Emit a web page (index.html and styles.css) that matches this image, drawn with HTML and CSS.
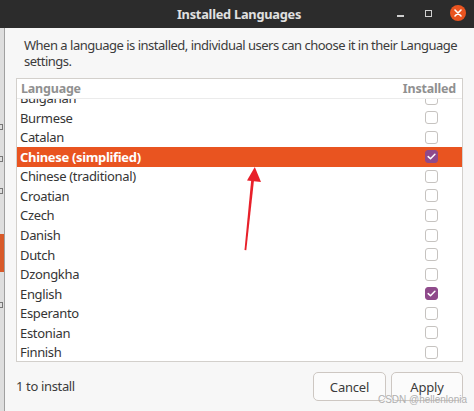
FILE: index.html
```html
<!DOCTYPE html>
<html>
<head>
<meta charset="utf-8">
<link rel="stylesheet" href="styles.css">
</head>
<body>
<div class="screen">
  <div class="titlebar">
    <div class="title">Installed Languages</div>
    <div class="controls">
      <span class="ctl min"></span>
      <span class="ctl max"></span>
      <span class="ctl close">
        <svg width="16" height="16" viewBox="0 0 16 16"><circle cx="8" cy="8" r="8" fill="#e95420"/><path d="M5 5 L11 11 M11 5 L5 11" stroke="#fff" stroke-width="1.6" stroke-linecap="round"/></svg>
      </span>
    </div>
  </div>
  <div class="main">
    <div class="strip">
      <span class="strip-mark m1"></span>
      <span class="strip-mark m2"></span>
      <span class="strip-mark m3"></span>
      <span class="strip-orange"></span>
      <span class="strip-mark m4"></span>
    </div>
    <div class="dialog">
      <p class="desc">When a language is installed, individual users can choose it in their Language settings.</p>
      <div class="listbox">
        <div class="header">
          <span class="col-name">Language</span>
          <span class="col-inst">Installed</span>
        </div>
        <div class="rows-clip">
          <div class="rows">
            <div class="row"><span class="name">Bulgarian</span><span class="cell"><span class="cb"></span></span></div>
            <div class="row"><span class="name">Burmese</span><span class="cell"><span class="cb"></span></span></div>
            <div class="row"><span class="name">Catalan</span><span class="cell"><span class="cb"></span></span></div>
            <div class="row selected"><span class="name">Chinese (simplified)</span><span class="cell"><span class="cb checked"><svg width="13" height="13" viewBox="0 0 13 13"><path d="M3.2 6.6 L5.5 8.8 L9.9 4.3" fill="none" stroke="#fff" stroke-width="1.5" stroke-linecap="round" stroke-linejoin="round"/></svg></span></span></div>
            <div class="row"><span class="name">Chinese (traditional)</span><span class="cell"><span class="cb"></span></span></div>
            <div class="row"><span class="name">Croatian</span><span class="cell"><span class="cb"></span></span></div>
            <div class="row"><span class="name">Czech</span><span class="cell"><span class="cb"></span></span></div>
            <div class="row"><span class="name">Danish</span><span class="cell"><span class="cb"></span></span></div>
            <div class="row"><span class="name">Dutch</span><span class="cell"><span class="cb"></span></span></div>
            <div class="row"><span class="name">Dzongkha</span><span class="cell"><span class="cb"></span></span></div>
            <div class="row"><span class="name">English</span><span class="cell"><span class="cb checked"><svg width="13" height="13" viewBox="0 0 13 13"><path d="M3.2 6.6 L5.5 8.8 L9.9 4.3" fill="none" stroke="#fff" stroke-width="1.5" stroke-linecap="round" stroke-linejoin="round"/></svg></span></span></div>
            <div class="row"><span class="name">Esperanto</span><span class="cell"><span class="cb"></span></span></div>
            <div class="row"><span class="name">Estonian</span><span class="cell"><span class="cb"></span></span></div>
            <div class="row"><span class="name">Finnish</span><span class="cell"><span class="cb"></span></span></div>
          </div>
        </div>
      </div>
      <div class="footer">
        <span class="status">1 to install</span>
        <div class="buttons">
          <button class="btn">Cancel</button>
          <button class="btn">Apply</button>
        </div>
      </div>
    </div>
  </div>
  <svg class="arrow" width="474" height="411" viewBox="0 0 474 411">
    <path d="M244.5 250 L251.2 180 L254 180.3 L246.3 250.2 Z" fill="#e8202a"/>
    <path d="M254.8 167 L261 182 L247 180.6 Z" fill="#e8202a"/>
  </svg>
  <div class="watermark">CSDN @hellenlonia</div>
</div>
</body>
</html>
```
FILE: styles.css
```css
* { box-sizing: border-box; }
html, body { margin: 0; padding: 0; }
body {
  width: 474px;
  height: 411px;
  overflow: hidden;
  font-family: "Noto Sans", "DejaVu Sans", sans-serif;
  background: #f6f5f4;
}
.screen {
  position: relative;
  width: 474px;
  height: 411px;
  display: flex;
  flex-direction: column;
}
.titlebar {
  height: 28px;
  background: #2c2c2c;
  display: flex;
  align-items: center;
  justify-content: center;
  position: relative;
  flex: none;
}
.title {
  color: #e0e0e0;
  font-weight: bold;
  font-size: 12.8px;
  margin-left: 4px;
  letter-spacing: -0.25px;
}
.controls {
  position: absolute;
  right: 8px;
  top: 5px;
  display: flex;
  align-items: center;
  height: 16px;
}
.ctl { display: block; }
.min {
  width: 7px;
  height: 2px;
  background: #cfcfcf;
  margin-top: 5px;
  margin-right: 21px;
}
.max {
  width: 7px;
  height: 7px;
  border: 1.5px solid #d0d0d0;
  margin-right: 18px;
}
.close { width: 16px; height: 16px; }
.close svg { display: block; }
.main {
  flex: 1;
  display: flex;
  min-height: 0;
}
.strip {
  width: 5px;
  flex: none;
  background: #dedede;
  border-right: 1px solid #a0a0a0;
  display: flex;
  flex-direction: column;
  padding-top: 96px;
}
.strip-mark {
  display: block;
  width: 3px;
  height: 6px;
  border: 1px solid #777;
  border-left: none;
  margin-bottom: 26px;
}
.strip-orange {
  display: block;
  width: 4px;
  height: 38px;
  background: #d85a2a;
  margin-top: 14px;
  margin-bottom: 30px;
}
.dialog {
  flex: 1;
  background: #f7f7f7;
  display: flex;
  flex-direction: column;
  padding: 9px 11px 0 11px;
}
.desc {
  margin: 0 0 9px 8px;
  font-size: 13px;
  line-height: 16px;
  color: #3c3c3c;
  letter-spacing: -0.5px;
}
.listbox {
  border: 1px solid #d3d0cc;
  background: #ffffff;
  height: 284px;
  display: flex;
  flex-direction: column;
  flex: none;
}
.header {
  height: 20px;
  flex: none;
  display: flex;
  align-items: center;
  border-bottom: 1px solid #ebebeb;
  font-size: 12.5px;
  font-weight: bold;
  color: #909090;
  letter-spacing: -0.2px;
}
.col-name { flex: 1; padding-left: 4px; }
.col-inst { padding-right: 6px; }
.rows-clip {
  flex: 1;
  overflow: hidden;
}
.rows { margin-top: -10.6px; }
.row {
  height: 19.55px;
  display: flex;
  align-items: center;
  font-size: 13px;
  color: #353535;
  letter-spacing: -0.33px;
}
.row .name { flex: 1; padding-left: 3px; }
.row.selected {
  background: #e95420;
  color: #ffffff;
  font-weight: bold;
}
.cell {
  width: 58px;
  display: flex;
  justify-content: center;
  padding-right: 4px;
}
.cb {
  width: 13px;
  height: 13px;
  border: 1px solid #c6c3c0;
  border-radius: 3px;
  background: #ffffff;
  display: block;
}
.cb svg { display: block; margin: -1px; }
.cb.checked {
  background: #8f4a8b;
  border-color: #8f4a8b;
}
.footer {
  flex: 1;
  display: flex;
  align-items: flex-start;
  padding-top: 10px;
}
.status {
  flex: 1;
  font-size: 13px;
  color: #3c3c3c;
  line-height: 29px;
  letter-spacing: -0.35px;
}
.buttons { display: flex; gap: 5px; }
.btn {
  height: 29px;
  border: 1px solid #cdc7c2;
  border-radius: 5px;
  background: #fbfbfb;
  font-family: "Noto Sans", "DejaVu Sans", sans-serif;
  font-size: 13px;
  letter-spacing: -0.2px;
  color: #3c3c3c;
  padding: 0;
}
.btn:first-child { width: 73px; }
.btn:last-child { width: 72px; }
.arrow {
  position: absolute;
  left: 0;
  top: 0;
  pointer-events: none;
}
.watermark {
  position: absolute;
  right: 7px;
  top: 394px;
  font-family: "Liberation Sans", sans-serif;
  font-size: 10px;
  color: #b0b0b0;
}
```
